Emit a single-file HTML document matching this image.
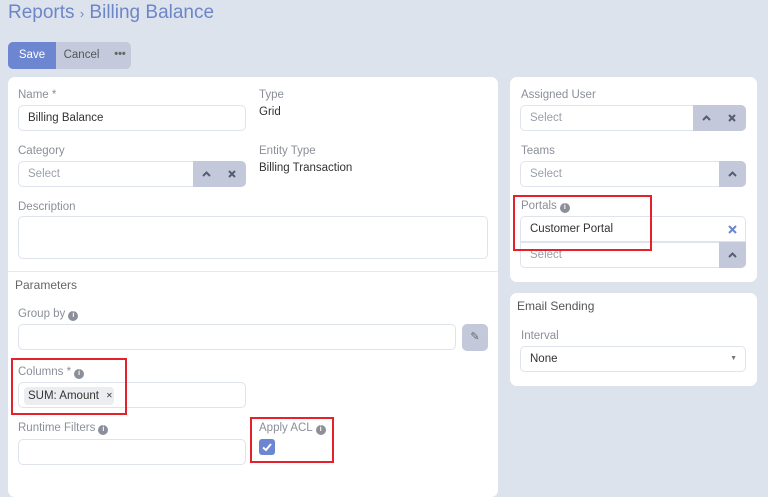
<!DOCTYPE html>
<html><head><style>
*{box-sizing:border-box;margin:0;padding:0}
body{width:768px;height:480px;overflow:hidden;background:#dde3ed;font-family:"Liberation Sans",sans-serif;font-size:12px;color:#333;position:relative}
.a{position:absolute}
.lbl{position:absolute;color:#8a8f99;font-size:11.5px}
.inp{position:absolute;background:#fff;border:1px solid #dfe3ec;border-radius:5px;height:26px;padding:0 9px;line-height:24px;font-size:11.5px;white-space:nowrap}
.ph{color:#9aa0aa}
.gb{position:absolute;background:#c3c9da;top:-1px;bottom:-1px;color:#555d70}
.gb svg{position:absolute;top:9px}
.panel{position:absolute;background:#fff;border-radius:7px}
.info{display:inline-block;width:10px;height:10px;border-radius:50%;background:#8a8f99;color:#fff;font-size:7px;line-height:10px;text-align:center;font-weight:bold;vertical-align:0px;margin-left:3px}
.red{position:absolute;border:2px solid #e5222b}
</style></head><body>
<div class="a" style="left:8px;top:2px;font-size:19px;color:#6c86c8">Reports <span style="font-size:13px">›</span> Billing Balance</div>
<div class="a" style="left:8px;top:42px;width:123px;height:27px;border-radius:5px;background:#c4cadb;overflow:hidden">
<div class="a" style="left:0;top:0;width:48px;height:27px;background:#6c86d2;color:#fff;text-align:center;line-height:27px;font-size:11.5px">Save</div>
<div class="a" style="left:48px;top:0;width:51px;height:27px;color:#555;text-align:center;line-height:27px;font-size:11.5px">Cancel</div>
<div class="a" style="left:101px;top:0;width:22px;height:27px;color:#666;text-align:center;line-height:25px;font-size:11px;font-weight:bold">•••</div>
</div>

<div class="panel" style="left:8px;top:77px;width:490px;height:420px"></div>
<div class="lbl" style="left:18px;top:89px">Name *</div>
<div class="inp" style="left:18px;top:105px;width:228px">Billing Balance</div>
<div class="lbl" style="left:259px;top:89px">Type</div>
<div class="a" style="left:259px;top:106px;font-size:11.5px">Grid</div>
<div class="lbl" style="left:18px;top:145px">Category</div>
<div class="inp" style="left:18px;top:161px;width:228px"><span class="ph">Select</span><div class="gb" style="left:174px;width:53px;border-radius:0 5px 5px 0">
<svg style="left:9px" width="9" height="8" viewBox="0 0 9 8"><path d="M1 6L4.5 2.5L8 6" stroke="#555d70" stroke-width="2" fill="none"/></svg>
<svg style="left:35px" width="8" height="8" viewBox="0 0 8 8"><path d="M1 1L7 7M7 1L1 7" stroke="#555d70" stroke-width="2"/></svg></div></div>
<div class="lbl" style="left:259px;top:145px">Entity Type</div>
<div class="a" style="left:259px;top:162px;font-size:11.5px">Billing Transaction</div>
<div class="lbl" style="left:18px;top:201px">Description</div>
<div class="inp" style="left:18px;top:216px;width:470px;height:43px"></div>
<div class="a" style="left:8px;top:271px;width:490px;height:1px;background:#e6e9f0"></div>
<div class="a" style="left:15px;top:278px;color:#666;font-size:12px">Parameters</div>
<div class="lbl" style="left:18px;top:308px">Group by<span class="info">i</span></div>
<div class="inp" style="left:18px;top:324px;width:438px"></div>
<div class="a" style="left:462px;top:324px;width:26px;height:27px;border-radius:5px;background:#c3c9da;color:#666;text-align:center;line-height:27px;font-size:11px">✎</div>
<div class="lbl" style="left:18px;top:366px">Columns *<span class="info">i</span></div>
<div class="inp" style="left:18px;top:382px;width:228px"></div>
<div class="a" style="left:24px;top:387px;width:90px;height:18px;background:#ebedf1;border-radius:4px;font-size:11.5px;line-height:18px;padding-left:4px;white-space:nowrap">SUM: Amount<span class="a" style="left:82px;top:0;font-size:8px">✕</span></div>
<div class="red" style="left:11px;top:358px;width:116px;height:57px"></div>
<div class="lbl" style="left:18px;top:422px">Runtime Filters<span class="info">i</span></div>
<div class="inp" style="left:18px;top:439px;width:228px"></div>
<div class="lbl" style="left:259px;top:422px">Apply ACL<span class="info">i</span></div>
<div class="a" style="left:259px;top:439px;width:16px;height:16px;background:#6c86d2;border-radius:3px"><svg width="16" height="16" viewBox="0 0 16 16"><path d="M4 8.5L7 11L12 5" stroke="#fff" stroke-width="2" fill="none"/></svg></div>
<div class="red" style="left:250px;top:417px;width:84px;height:46px"></div>

<div class="panel" style="left:510px;top:77px;width:247px;height:205px"></div>
<div class="lbl" style="left:521px;top:89px">Assigned User</div>
<div class="inp" style="left:520px;top:105px;width:226px"><span class="ph">Select</span><div class="gb" style="left:172px;width:53px;border-radius:0 5px 5px 0">
<svg style="left:9px" width="9" height="8" viewBox="0 0 9 8"><path d="M1 6L4.5 2.5L8 6" stroke="#555d70" stroke-width="2" fill="none"/></svg>
<svg style="left:35px" width="8" height="8" viewBox="0 0 8 8"><path d="M1 1L7 7M7 1L1 7" stroke="#555d70" stroke-width="2"/></svg></div></div>
<div class="lbl" style="left:521px;top:145px">Teams</div>
<div class="inp" style="left:520px;top:161px;width:226px"><span class="ph">Select</span><div class="gb" style="left:198px;width:27px;border-radius:0 5px 5px 0"><svg style="left:9px" width="9" height="8" viewBox="0 0 9 8"><path d="M1 6L4.5 2.5L8 6" stroke="#555d70" stroke-width="2" fill="none"/></svg></div></div>
<div class="lbl" style="left:521px;top:200px">Portals<span class="info">i</span></div>
<div class="inp" style="left:520px;top:216px;width:226px;border-radius:5px 5px 0 0">Customer Portal<svg class="a" style="right:8px;top:8px" width="9" height="9" viewBox="0 0 9 9"><path d="M1 1L8 8M8 1L1 8" stroke="#6c86d2" stroke-width="2"/></svg></div>
<div class="inp" style="left:520px;top:242px;width:226px;border-radius:0 0 5px 5px"><span class="ph">Select</span><div class="gb" style="left:198px;width:27px;border-radius:0 0 5px 0"><svg style="left:9px" width="9" height="8" viewBox="0 0 9 8"><path d="M1 6L4.5 2.5L8 6" stroke="#555d70" stroke-width="2" fill="none"/></svg></div></div>
<div class="red" style="left:513px;top:195px;width:139px;height:56px"></div>

<div class="panel" style="left:510px;top:293px;width:247px;height:93px"></div>
<div class="a" style="left:517px;top:299px;color:#555;font-size:12px">Email Sending</div>
<div class="lbl" style="left:521px;top:330px">Interval</div>
<div class="inp" style="left:520px;top:346px;width:226px">None<span class="a" style="right:8px;top:0;font-size:7px;color:#777">▼</span></div>
</body></html>
